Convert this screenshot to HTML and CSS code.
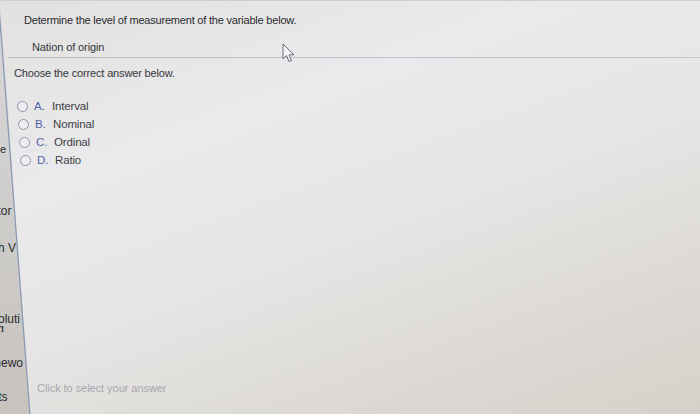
FILE: index.html
```html
<!DOCTYPE html>
<html>
<head>
<meta charset="utf-8">
<link rel="stylesheet" href="styles.css">
</head>
<body>
<div class="page">
  <main class="main">
    <p class="question">Determine the level of measurement of the variable below.</p>
    <p class="variable">Nation of origin</p>
    <div class="rule"></div>
    <p class="prompt">Choose the correct answer below.</p>
    <ul class="options">
      <li class="opt o1"><span class="radio"></span><span class="letter">A.</span><span class="label">Interval</span></li>
      <li class="opt o2"><span class="radio"></span><span class="letter">B.</span><span class="label">Nominal</span></li>
      <li class="opt o3"><span class="radio"></span><span class="letter">C.</span><span class="label">Ordinal</span></li>
      <li class="opt o4"><span class="radio"></span><span class="letter">D.</span><span class="label">Ratio</span></li>
    </ul>
    <p class="hint">Click to select your answer</p>
  </main>
  <aside class="sidebar">
    <div class="side-item s1"><span>Rule</span></div>
    <div class="side-item s2"><span>Tutor</span></div>
    <div class="side-item s3"><span>Math V</span></div>
    <div class="side-item s4"><span>Soluti</span></div>
    <div class="side-item s4b"><span>g</span></div>
    <div class="side-item s5"><span>Homewo</span></div>
    <div class="side-item s6"><span>Points</span></div>
  </aside>
  <svg class="edge" width="40" height="414" viewBox="0 0 40 414">
    <line x1="-1.5" y1="0" x2="30" y2="414" stroke="#8898b6" stroke-width="1.2"/>
  </svg>
  <svg class="cursor" width="14" height="22" viewBox="0 0 14 22">
    <path d="M1 1 L1 16 L4.5 12.5 L7 18.5 L9.5 17.5 L7 11.8 L12 11.8 Z" fill="#f4f4f6" stroke="#6a6c78" stroke-width="1" stroke-linejoin="round"/>
  </svg>
</div>
</body>
</html>
```
FILE: styles.css
```css
html, body {
  margin: 0;
  padding: 0;
  width: 700px;
  height: 414px;
  overflow: hidden;
}
body {
  font-family: "Liberation Sans", Arial, sans-serif;
  color: #2f3034;
}
.page {
  position: relative;
  width: 700px;
  height: 414px;
  background: linear-gradient(160deg, #e2e1df 0%, #eaeaec 30%, #e6e5e4 55%, #dcd9d4 80%, #d5d1ca 100%);
  border-top: 1px solid #cfcfd2;
  box-sizing: border-box;
}
.main {
  display: flex;
  flex-direction: column;
  height: 100%;
}
.main p { margin: 0; }
.question {
  font-size: 11px;
  line-height: 14px;
  margin-top: 12px !important;
  padding-left: 24px;
  letter-spacing: -0.2px;
  color: #2a2b31;
}
.variable {
  font-size: 11px;
  line-height: 14px;
  margin-top: 13px !important;
  padding-left: 32px;
  letter-spacing: -0.1px;
  color: #34353b;
}
.rule {
  height: 1px;
  margin: 3px 0 0 8px;
  background: linear-gradient(90deg, #b7bac4, #c3c7d3);
}
.prompt {
  font-size: 11px;
  line-height: 14px;
  margin-top: 8px !important;
  padding-left: 14px;
  letter-spacing: -0.15px;
  color: #34353b;
}
.options {
  list-style: none;
  margin: 17px 0 0;
  padding: 0 0 0 17px;
}
.opt {
  display: flex;
  align-items: center;
  height: 18px;
  font-size: 11.5px;
  letter-spacing: -0.15px;
  color: #3d3e44;
}
.o2 { padding-left: 1px; }
.o3 { padding-left: 2px; }
.o4 { padding-left: 3px; }
.radio {
  width: 9px;
  height: 9px;
  border: 1px solid #8d93ad;
  border-radius: 50%;
  background: #eeeef2;
  margin-right: 6px;
}
.letter {
  color: #5262a6;
  width: 18px;
}
.hint {
  margin-top: auto !important;
  margin-bottom: 19px !important;
  padding-left: 37px;
  font-size: 11px;
  line-height: 14px;
  color: #a6a7b0;
  letter-spacing: -0.05px;
}
.sidebar {
  position: absolute;
  left: 0;
  top: 0;
  width: 32px;
  height: 100%;
  background: linear-gradient(180deg, #d8d8d8, #cdcbc8 60%, #c7c3bd);
  clip-path: polygon(0 0, 0 0, 30px 100%, 0 100%);
  font-size: 12px;
  color: #2a2b2f;
}
.side-item {
  position: absolute;
  left: 0;
  display: flex;
  justify-content: flex-end;
  white-space: nowrap;
  overflow: hidden;
  line-height: 14px;
}
.side-item span { flex: none; }
.s1 { top: 141px; width: 6px; font-size: 11px; }
.s2 { top: 203px; width: 11.5px; }
.s3 { top: 240px; width: 16px; }
.s4 { top: 311px; width: 20px; }
.s4b { top: 321px; width: 4px; height: 10px; }
.s5 { top: 355px; width: 23px; }
.s6 { top: 389px; width: 7.5px; }
.edge {
  position: absolute;
  left: 0;
  top: 0;
}
.cursor {
  position: absolute;
  left: 282px;
  top: 42px;
}
```
